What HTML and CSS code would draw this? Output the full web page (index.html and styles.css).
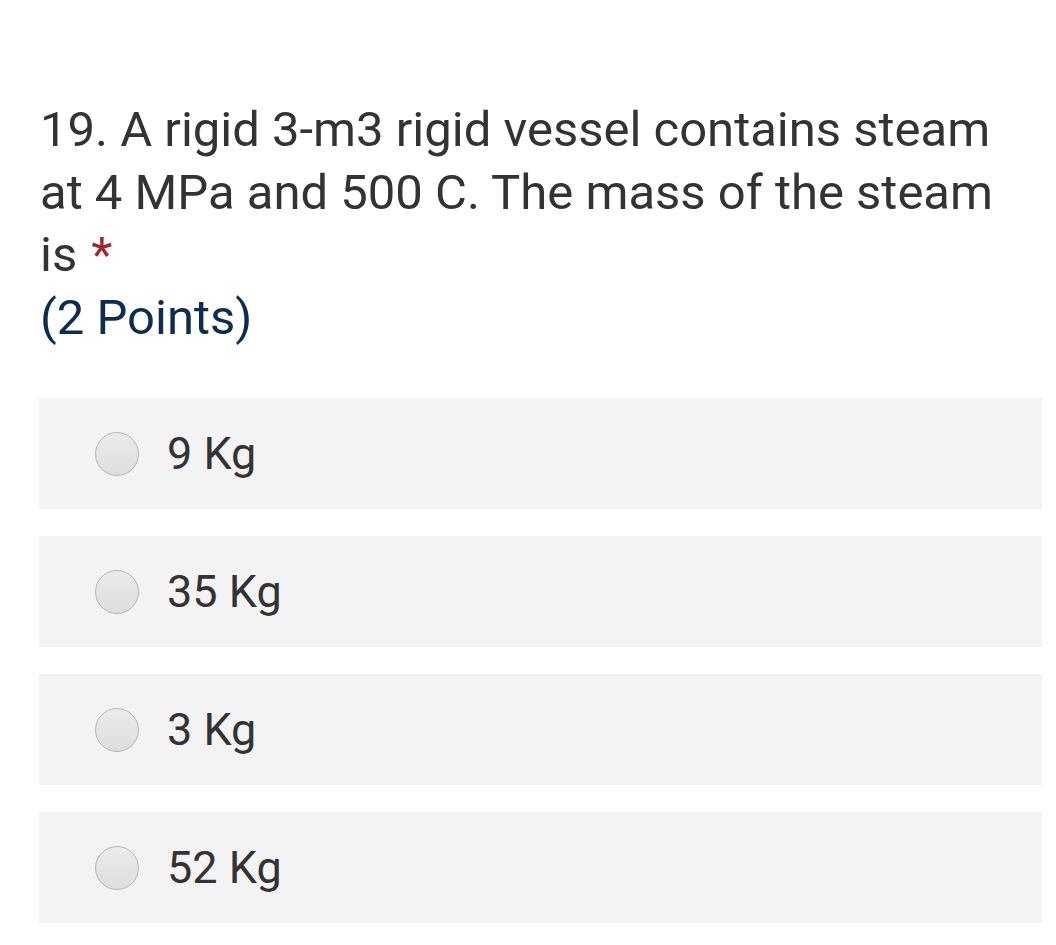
FILE: index.html
```html
<!DOCTYPE html>
<html>
<head>
<meta charset="utf-8">
<link rel="stylesheet" href="styles.css">
</head>
<body>
<div class="page">
  <div class="question">
    <div class="title">19. A rigid 3-m3 rigid vessel contains steam at 4 MPa and 500 C. The mass of the steam is <span class="req">*</span></div>
    <div class="points">(2 Points)</div>
  </div>
  <div class="options">
    <div class="option"><span class="radio"></span><span class="label">9 Kg</span></div>
    <div class="option"><span class="radio"></span><span class="label">35 Kg</span></div>
    <div class="option"><span class="radio"></span><span class="label">3 Kg</span></div>
    <div class="option"><span class="radio"></span><span class="label">52 Kg</span></div>
  </div>
</div>
</body>
</html>
```
FILE: styles.css
```css
html, body { margin: 0; padding: 0; background: #fff; }
body { font-family: Roboto, "Liberation Sans", sans-serif; color: #333; }
.page { padding: 99px 14px 0 39px; }
.question { padding-left: 1px; max-width: 975px; }
.title { font-size: 49px; line-height: 62.5px; }
.req { color: #a4262c; margin-left: 2px; }
.points { font-size: 49px; line-height: 62.5px; color: #0b2d50; }
.options { margin-top: 49px; display: flex; flex-direction: column; gap: 27px; }
.option { background: #f3f3f3; height: 111px; display: flex; align-items: center; padding-left: 56px; }
.radio { width: 42px; height: 42px; border-radius: 50%; border: 1px solid #b5b5b5; background: linear-gradient(#ebebeb, #dedede); flex: none; }
.label { font-size: 45px; margin-left: 28px; color: #333; }
```
